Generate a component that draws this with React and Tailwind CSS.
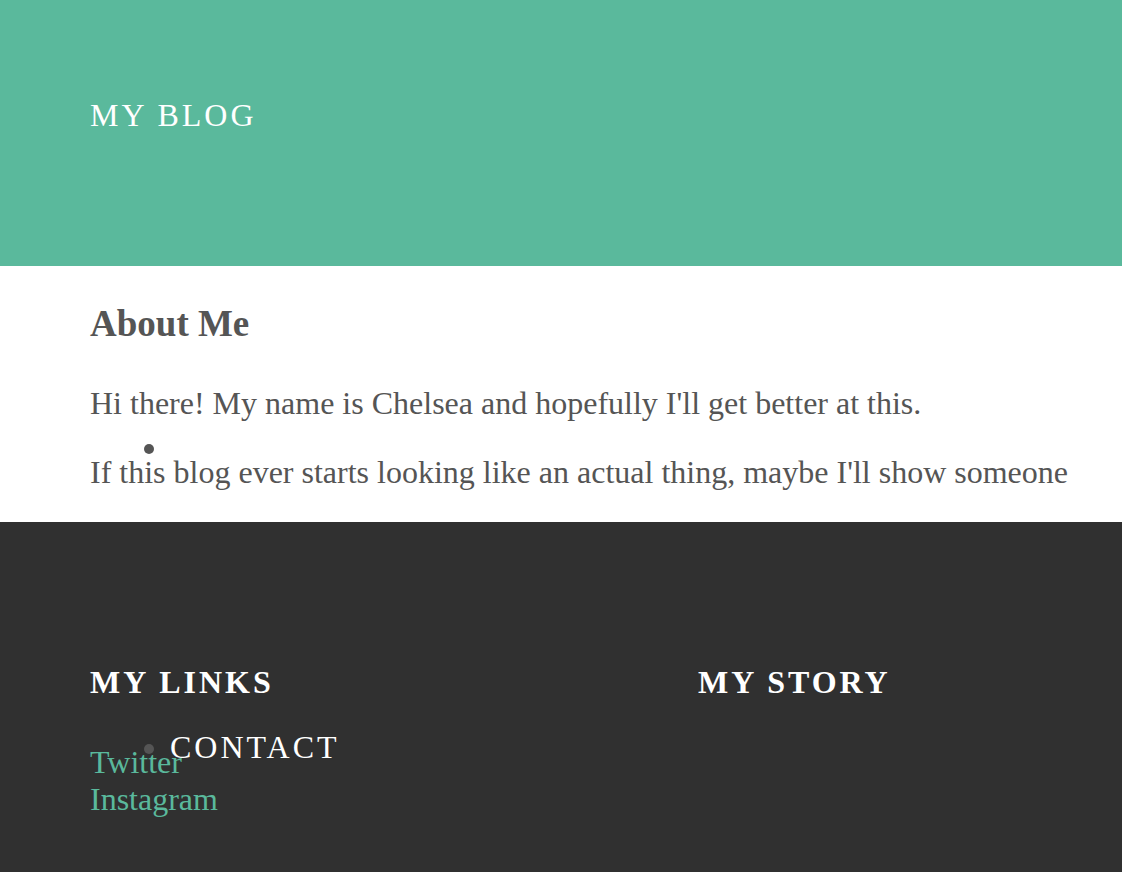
import React from "react";

export default function App() {
  return (
    <div className="relative min-h-screen bg-[#303030] font-['Liberation_Serif','Times_New_Roman',serif] text-[32px] leading-[36.8px]">
      <header className="h-[266px] bg-[#5ab99c] px-[90px] pt-[97px]">
        <h1 className="text-[32px] font-normal tracking-[3px] text-white">MY BLOG</h1>
      </header>

      <section className="bg-white pl-[90px] pt-[37px] pb-[31px] text-[#555555]">
        <h2 className="text-[37px] font-bold leading-[42px]">About Me</h2>
        <p className="mt-[40px] whitespace-nowrap">Hi there! My name is Chelsea and hopefully I'll get better at this.</p>
        <p className="mt-[32px] whitespace-nowrap">If this blog ever starts looking like an actual thing, maybe I'll show someone</p>
      </section>

      <footer className="flex px-[90px] pt-[142px] pb-[60px]">
        <div className="w-[608px]">
          <h3 className="font-bold tracking-[3px] text-white">MY LINKS</h3>
          <div className="mt-[44px] flex flex-col text-[#5ab99c]">
            <a href="#">Twitter</a>
            <a href="#">Instagram</a>
          </div>
        </div>
        <div>
          <h3 className="font-bold tracking-[3px] text-white">MY STORY</h3>
        </div>
      </footer>

      <ul className="absolute left-[130px] top-[429px] list-disc pl-[40px] text-[#555555]">
        <li className="h-[300px]">
          <a href="#" className="text-white">&nbsp;</a>
        </li>
        <li>
          <a href="#" className="tracking-[3px] text-white">CONTACT</a>
        </li>
      </ul>
    </div>
  );
}
